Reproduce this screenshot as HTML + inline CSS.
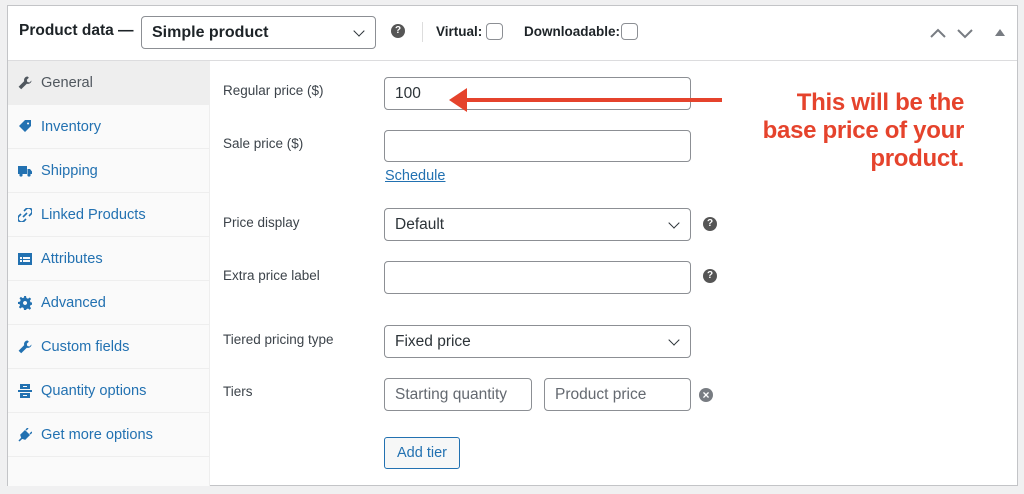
<!DOCTYPE html>
<html><head><style>
*{box-sizing:border-box;margin:0;padding:0}
body{width:1024px;height:494px;background:#f0f0f1;font-family:"Liberation Sans",Arial,sans-serif;position:relative;overflow:hidden;color:#3c434a}
.panel{position:absolute;left:7px;top:5px;width:1011px;height:481px;background:#fff;border:1px solid #c3c4c7}
.hdr{position:absolute;left:0;top:0;width:100%;height:55px;border-bottom:1px solid #dcdcde}
.abs{position:absolute}
.side{position:absolute;left:0;top:55px;width:202px;height:425px;background:#fafafa;border-right:1px solid #eee}
.tab{height:44px;border-bottom:1px solid #eee;display:flex;align-items:center;padding-left:10px;color:#2271b1;font-size:14.6px}
.tab.act{background:#eee;color:#50575e}
.tab svg{width:14px;height:14px;margin-right:9px;fill:#2271b1}
.tab.act svg{fill:#50575e}
.lbl{position:absolute;left:223px;font-size:13.5px;color:#3c434a}
.inp{position:absolute;border:1px solid #8c8f94;border-radius:4px;background:#fff;font-size:15.5px;color:#2c3338;padding-left:10px;display:flex;align-items:center}
.sel:after{content:"";position:absolute;right:12px;top:10px;width:7px;height:7px;border-right:1.6px solid #2c3338;border-bottom:1.6px solid #2c3338;transform:rotate(45deg)}
.help{position:absolute;width:14px;height:14px;border-radius:50%;background:#555;color:#fff;font-size:10px;font-weight:bold;text-align:center;line-height:14px}
.cb{position:absolute;width:17px;height:17px;border:1px solid #8c8f94;border-radius:4px;background:#fff}
</style></head><body>
<div class="panel">
 <div class="hdr">
  <div class="abs" style="left:11px;top:16px;font-size:15.5px;font-weight:bold;color:#1d2327">Product data —</div>
  <div class="inp sel" style="left:133px;top:10px;width:235px;height:33px;font-weight:bold;font-size:16px;color:#1d2327">Simple product</div>
  <div class="help" style="left:383px;top:18px">?</div>
  <div class="abs" style="left:414px;top:16px;width:1px;height:20px;background:#ddd"></div>
  <div class="abs" style="left:428px;top:18px;font-size:13.5px;font-weight:bold;color:#1d2327">Virtual:</div>
  <div class="cb" style="left:478px;top:17px"></div>
  <div class="abs" style="left:516px;top:18px;font-size:13.5px;font-weight:bold;color:#1d2327">Downloadable:</div>
  <div class="cb" style="left:613px;top:17px"></div>
  <svg class="abs" style="left:922px;top:20px" width="60" height="14" viewBox="0 0 60 14"><path d="M1 11 L8 4 L15 11" stroke="#787c82" stroke-width="2" fill="none"/><path d="M28 4 L35 11 L42 4" stroke="#787c82" stroke-width="2" fill="none"/></svg>
  <svg class="abs" style="left:987px;top:22px" width="10" height="8"><path d="M0 8 L5 1 L10 8Z" fill="#787c82"/></svg>
 </div>
 <div class="side">
  <div class="tab act"><svg viewBox="0 0 14 14"><path d="M9.5 0.5a3.5 3.5 0 0 0-3.3 4.6L0.6 10.7l2.6 2.6 5.6-5.6A3.5 3.5 0 0 0 13.5 4.5l-2 2-2.2-0.5-0.5-2.2 2-2A3.5 3.5 0 0 0 9.5 .5z"/></svg>General</div>
  <div class="tab"><svg viewBox="0 0 14 14"><path d="M1 6 L7 0 L13 0 L13 6 L7 12Z M10 2.5a1 1 0 1 0 0.1 0z"/></svg>Inventory</div>
  <div class="tab"><svg viewBox="0 0 14 14"><path d="M0 2h9v8H0z M9.5 5h2.5l2 2.5V10H9.5z"/><circle cx="3" cy="11" r="1.6"/><circle cx="11" cy="11" r="1.6"/></svg>Shipping</div>
  <div class="tab"><svg viewBox="0 0 14 14"><path d="M5 9 L9 5" stroke="#2271b1" stroke-width="1.6"/><path d="M6 3 L8 1 A2.5 2.5 0 0 1 13 6 L11 8 M8 11 L6 13 A2.5 2.5 0 0 1 1 8 L3 6" stroke="#2271b1" stroke-width="1.6" fill="none"/></svg>Linked Products</div>
  <div class="tab"><svg viewBox="0 0 14 14"><path d="M0 1h14v12H0z M2 5h2v2H2z M5 5h7v2H5z M2 8h2v2H2z M5 8h7v2H5z" fill-rule="evenodd"/></svg>Attributes</div>
  <div class="tab"><svg viewBox="0 0 14 14"><path d="M6 0h2l.4 2 1.6.7 1.7-1.2 1.4 1.4-1.2 1.7.7 1.6 2 .4v2l-2 .4-.7 1.6 1.2 1.7-1.4 1.4-1.7-1.2-1.6.7L8 14H6l-.4-2-1.6-.7-1.7 1.2-1.4-1.4 1.2-1.7L1.4 8 0 8V6l2-.4.7-1.6-1.2-1.7 1.4-1.4 1.7 1.2 1.6-.7z M7 5a2 2 0 1 0 .1 0z" fill-rule="evenodd"/></svg>Advanced</div>
  <div class="tab"><svg viewBox="0 0 14 14"><path d="M9.5 0.5a3.5 3.5 0 0 0-3.3 4.6L0.6 10.7l2.6 2.6 5.6-5.6A3.5 3.5 0 0 0 13.5 4.5l-2 2-2.2-0.5-0.5-2.2 2-2A3.5 3.5 0 0 0 9.5 .5z"/></svg>Custom fields</div>
  <div class="tab"><svg viewBox="0 0 14 14"><path d="M2 0h10v5H2z M0 6h14v2H0z M2 9h10v5H2z M5 2h4v1H5z M5 11h4v1H5z" fill-rule="evenodd"/></svg>Quantity options</div>
  <div class="tab"><svg viewBox="0 0 14 14"><path d="M1 13 L4 10 L3 7 L7 3 L11 7 L7 11 L4 10Z M8 2 L10 0 M12 6 L14 4" stroke="#2271b1" stroke-width="1.5"/></svg>Get more options</div>
 </div>
 <div class="lbl" style="top:77px;left:215px">Regular price ($)</div>
 <div class="inp" style="left:376px;top:71px;width:307px;height:33px">100</div>
 <div class="lbl" style="top:130px;left:215px">Sale price ($)</div>
 <div class="inp" style="left:376px;top:124px;width:307px;height:32px"></div>
 <div class="abs" style="left:377px;top:162px;font-size:14.5px;color:#2271b1;text-decoration:underline">Schedule</div>
 <div class="lbl" style="top:209px;left:215px">Price display</div>
 <div class="inp sel" style="left:376px;top:202px;width:307px;height:33px">Default</div>
 <div class="help" style="left:695px;top:211px">?</div>
 <div class="lbl" style="top:262px;left:215px">Extra price label</div>
 <div class="inp" style="left:376px;top:255px;width:307px;height:33px"></div>
 <div class="help" style="left:695px;top:263px">?</div>
 <div class="lbl" style="top:326px;left:215px">Tiered pricing type</div>
 <div class="inp sel" style="left:376px;top:319px;width:307px;height:33px">Fixed price</div>
 <div class="lbl" style="top:378px;left:215px">Tiers</div>
 <div class="inp" style="left:376px;top:372px;width:148px;height:33px;color:#646970;overflow:hidden;white-space:nowrap">Starting quantity</div>
 <div class="inp" style="left:536px;top:372px;width:147px;height:33px;color:#646970">Product price</div>
 <div class="help" style="left:691px;top:382px;background:#787c82;font-size:12px;line-height:14px">×</div>
 <div class="abs" style="left:376px;top:431px;width:76px;height:32px;border:1px solid #2271b1;border-radius:3px;background:#f6f7f7;color:#2271b1;font-size:14.5px;text-align:center;line-height:30px">Add tier</div>
</div>
<svg class="abs" style="left:448px;top:87px" width="276" height="28"><path d="M16 13 H274" stroke="#e5432c" stroke-width="4"/><path d="M1 13 L19 1 L19 25Z" fill="#e5432c"/></svg>
<div class="abs" style="right:60px;top:89px;text-align:right;color:#e5432c;font-weight:bold;font-size:24px;line-height:28px;letter-spacing:-0.3px">This will be the<br>base price of your<br>product.</div>
</body></html>
